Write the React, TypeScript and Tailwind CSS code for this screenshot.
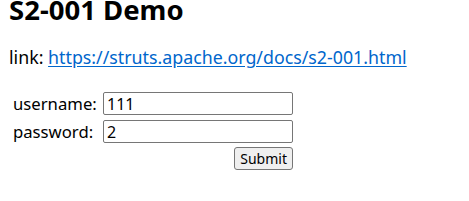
import React from "react";

export default function App() {
  return (
    <div className="min-h-screen bg-white px-[9px] text-black font-['Noto_Sans',sans-serif]">
      <h2 className="text-[27.5px] font-bold leading-[20px]">S2-001 Demo</h2>

      <p className="mt-[25px] text-[17.8px] leading-[24px]">
        link:{" "}
        <a href="#" className="text-[#0066cc] underline underline-offset-[2px]">
          https://struts.apache.org/docs/s2-001.html
        </a>
      </p>

      <form className="mt-[23px] ml-[2px] grid w-fit grid-cols-[90px_190px] gap-x-[2px] gap-y-[5px] items-center">
        <label className="pl-[2px] text-[16.7px] leading-[23px]">username:</label>
        <input
          defaultValue="111"
          className="h-[23px] w-[190px] rounded-[2px] border border-[#767676] px-[3px] text-[16px] outline-none"
        />
        <label className="pl-[2px] text-[16.7px] leading-[23px]">password:</label>
        <input
          type="text"
          defaultValue="2"
          className="h-[23px] w-[190px] rounded-[2px] border border-[#767676] px-[3px] text-[16px] outline-none"
        />
        <div />
        <div className="-mt-px flex justify-end">
          <button
            type="button"
            className="h-[23px] rounded-[3px] border border-[#767676] bg-[#efefef] px-[5px] text-[14px] leading-none"
          >
            Submit
          </button>
        </div>
      </form>
    </div>
  );
}
